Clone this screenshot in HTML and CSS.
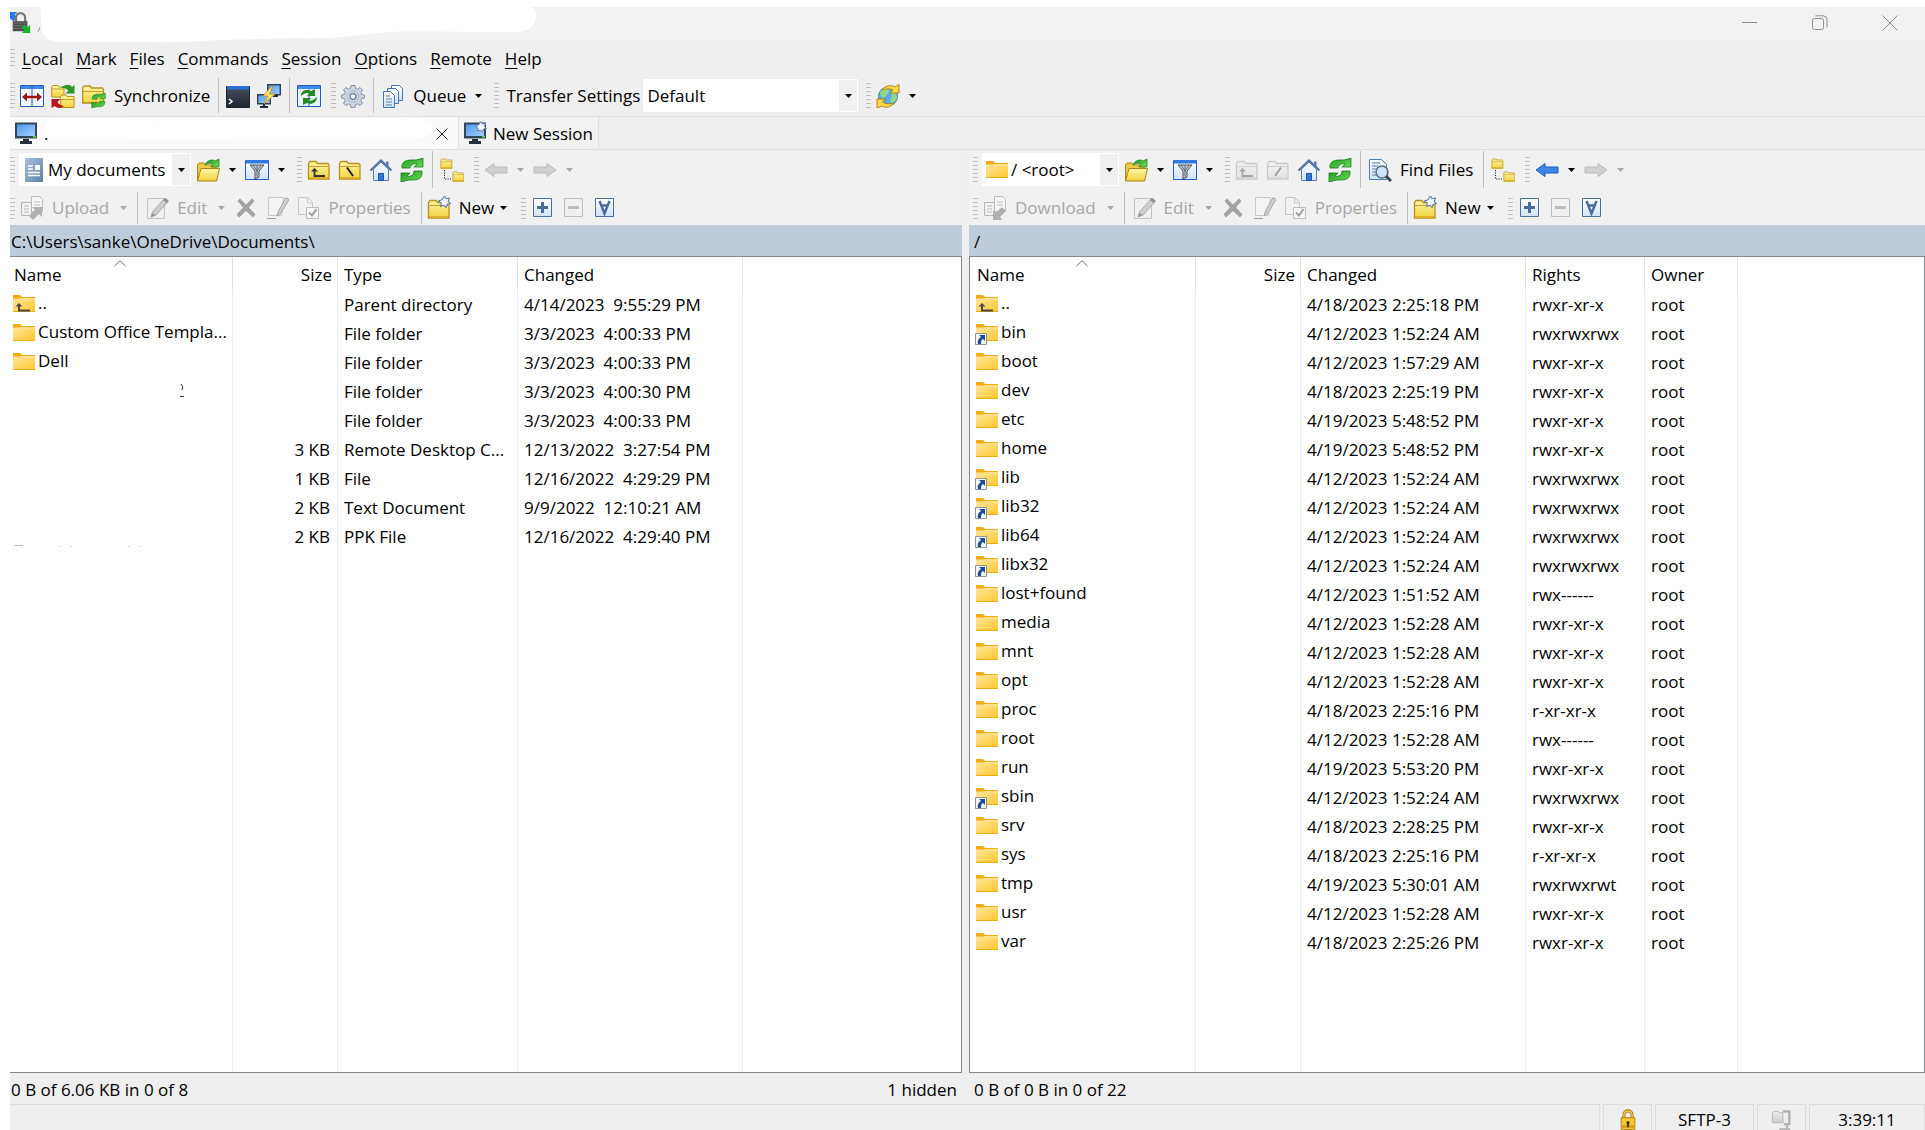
FILE: index.html
```html
<!DOCTYPE html>
<html lang="en">
<head>
    <meta charset="utf-8">
    <title>Documents - WinSCP</title>
    <link rel="stylesheet" href="styles.css">
</head>
<body>
<!-- shared icons -->
<svg class="defs" aria-hidden="true">
    <defs>
        <linearGradient id="gYellow" x1="0" y1="0" x2="0" y2="1"><stop offset="0" stop-color="#fdf6a8"/><stop offset="1" stop-color="#f3d33c"/></linearGradient>
        <linearGradient id="gFolder" x1="0" y1="0" x2="1" y2="1"><stop offset="0" stop-color="#ffe69a"/><stop offset="1" stop-color="#ffc832"/></linearGradient>
        <linearGradient id="gBlue" x1="0" y1="0" x2="1" y2="1"><stop offset="0" stop-color="#4f9bf5"/><stop offset="1" stop-color="#a5cdfb"/></linearGradient>
        <linearGradient id="gPale" x1="0" y1="0" x2="0" y2="1"><stop offset="0" stop-color="#ffffff"/><stop offset="1" stop-color="#cfe2f7"/></linearGradient>
        <linearGradient id="gDark" x1="0" y1="0" x2="0" y2="1"><stop offset="0" stop-color="#4a5361"/><stop offset="1" stop-color="#1d232d"/></linearGradient>
        <linearGradient id="gGreen" x1="0" y1="0" x2="1" y2="1"><stop offset="0" stop-color="#1d9a1d"/><stop offset="1" stop-color="#6fdc5a"/></linearGradient>
        <linearGradient id="gSteel" x1="0" y1="0" x2="1" y2="1"><stop offset="0" stop-color="#a9c1da"/><stop offset="1" stop-color="#5f82a8"/></linearGradient>
        <linearGradient id="gGrey" x1="0" y1="0" x2="0" y2="1"><stop offset="0" stop-color="#ededed"/><stop offset="1" stop-color="#cccccc"/></linearGradient>
    </defs>
    <symbol id="i-arrow" viewBox="0 0 7 4"><path d="M0 0h7L3.500 4z" fill="currentColor"/></symbol>
    <symbol id="i-compare" viewBox="0 0 24 24"><path d="M.5 1.500h23v21H.5z" fill="#f4f9ff" stroke="#2160ae"/><path d="M1 2h22v3H1z" fill="#3f8cf0"/><path d="M12 2v20" stroke="#2160ae"/><path d="M2 13l5-4.500v3.200h10V8.500l5 4.500-5 4.500v-3.200H7v3.200z" fill="#a01818"/></symbol>
    <symbol id="i-yf" viewBox="0 0 24 24"><path d="M1.500 21V5.500L3 3.500h6l1.500 2h10.500l1 1.500v14z" fill="url(#gYellow)" stroke="#b8901c" stroke-width="1.300"/><path d="M2 8.500h19.500" stroke="#c49d2a"/><path d="M2 20h19" stroke="#dcae2c" stroke-width="2"/></symbol>
    <symbol id="i-syncdirs" viewBox="0 0 24 24"><path d="M.7 13V3L2 1.500h5l1 1.500h5v10z" fill="url(#gYellow)" stroke="#b8901c"/><path d="M9.700 23.500v-11L11 11h4l1 1.500h7v11z" fill="url(#gYellow)" stroke="#b8901c"/><path d="M10 15.500h13M1 5h12" stroke="#c49d2a"/><path d="M10 4c4-4 9-4 11-1l2.500-2v8.500h-9l3-3c-2-2-4-2.500-7.500-2.500z" fill="#2a9624"/><path d="M13 22c-3 3-8 2-9 0l-3.500 2v-9h9l-3 3c1 2 3 3.500 6.500 4z" fill="#b41616"/></symbol>
    <symbol id="i-recycle" viewBox="0 0 24 24"><path d="M2 10C1 4 6 2 11 2h5l4-1 3-1v9h-9l3-3c-4-1-7 1-7 4z" fill="url(#gGreen)" stroke="#177a17" stroke-width=".8"/><path d="M22 13c1 7-4 9-8 9H9l-4 1-4 1v-9h9l-3 3c4 1 7-1 7-5z" fill="url(#gGreen)" stroke="#177a17" stroke-width=".8"/></symbol>
    <symbol id="i-sync" viewBox="0 0 24 24"><path d="M.7 19V3.500L2 2h6l1.500 2h11l1 1.500V19z" fill="url(#gYellow)" stroke="#b8901c" stroke-width="1.300"/><path d="M1 7.500h20" stroke="#c49d2a"/><svg x="9" y="9" width="15" height="15"><use href="#i-recycle"/></svg></symbol>
    <symbol id="i-console" viewBox="0 0 24 24"><path d="M.5 2.500h23v21H.5z" fill="url(#gDark)" stroke="#1d2430"/><path d="M1 2h22v3.500H1z" fill="#2a6fd6"/><path d="M3 15l3 2.500L3 20" fill="none" stroke="#fff" stroke-width="1.500"/></symbol>
    <symbol id="i-putty" viewBox="0 0 24 24"><path d="M10.700.7h12.600v10H10.700z" fill="url(#gBlue)" stroke="#2e4057" stroke-width="1.400"/><path d="M15 13h6v-2h-3z" fill="#222c3a"/><path d="M.7 10.700h12.600v9H.7z" fill="url(#gBlue)" stroke="#2e4057" stroke-width="1.400"/><path d="M3 22h8v2H3zM6 20h2v2H6z" fill="#222c3a"/><path d="M15 2L6 12h5L7 20 18 10h-5.500L16 2z" fill="#ffe36b" stroke="#c08f16" stroke-width=".8"/></symbol>
    <symbol id="i-keep" viewBox="0 0 24 24"><path d="M.5 1.500h23v21H.5z" fill="#e9f2fd" stroke="#2160ae"/><path d="M1 2h22v3H1z" fill="#3f8cf0"/><path d="M12 5v17" stroke="#2160ae"/><path d="M4 12c0-6 6-7 10-5l4-2v7h-8l2.500-2.500c-3-1-5.500 0-8.500 2.500z" fill="#23881f"/><path d="M20 13c0 6-6 8-10 6l-4 2v-7h8l-2.500 2.500c3 1 5.500-1 8.500-3.500z" fill="#23881f"/></symbol>
    <symbol id="i-gear" viewBox="0 0 24 24"><path d="M10 1.500h4l.6 3 1.800.7 2.600-1.700 2.500 2.500-1.700 2.600.7 1.800 3 .6v3l-3 .7-.7 1.800 1.700 2.600-2.500 2.500-2.600-1.700-1.800.7-.6 3h-4l-.6-3-1.800-.7L5 21.600l-2.500-2.500 1.700-2.600-.7-1.800-3-.7v-3l3-.6.7-1.800L2.500 6 5 3.500l2.600 1.700 1.800-.7z" fill="#ccd5df" stroke="#8592a3"/><circle cx="12" cy="12.500" r="5.500" fill="#dfe5eb" stroke="#a3adba"/><circle cx="12" cy="12.500" r="3" fill="#f5f6f8" stroke="#77859a" stroke-width="1.500"/></symbol>
    <symbol id="i-queue" viewBox="0 0 24 24"><g fill="url(#gPale)" stroke="#3f76b3"><path d="M10.500 1.500h8l3 3v12h-11z"/><path d="M6.500 4.500h8l3 3v12h-11z"/><path d="M2.500 7.500h7l4 4v12h-11z"/></g><path d="M5 12h4m-4 3h6m-6 3h6m-6 3h6" stroke="#4f83bb"/></symbol>
    <symbol id="i-globe" viewBox="0 0 24 24"><circle cx="12" cy="12.500" r="9.500" fill="#5fa8f2" stroke="#4a8a6a"/><path d="M4 9c2-5 6-6 8-5l1 4-4 5-3 1zM15 8l5 1 1 6-5 5-2-4 2-4z" fill="#8fd98a"/><path d="M6 6c4-5 9-5 13-3l4-2.500v8.500h-9l3-3c-3-1.500-7-1.500-11 0z" fill="#fdda3f" stroke="#a97c12" stroke-width=".9"/><path d="M18 19c-4 5-9 5-12 3l-5 2v-9h8.500l-3 3c3 2 7 2.500 11.500 1z" fill="#fdda3f" stroke="#a97c12" stroke-width=".9"/></symbol>
    <symbol id="i-monitor" viewBox="0 0 24 24"><path d="M1 1.500h22v16H1z" fill="#34465c"/><path d="M3 3.500h18v11.500H3z" fill="url(#gBlue)"/><path d="M19 15h3v1.500h-3z" fill="#6fd13c"/><path d="M9 18h6v2h3v3H6v-3h3z" fill="#26303d"/></symbol>
    <symbol id="i-star" viewBox="0 0 24 24"><path d="M12 1l3 5 6-1-2 6 4 4-6 1-2 6-4-4-6 2 1-6-5-4 6-2z" fill="#f4f9ff" stroke="#5c7fa8" stroke-width="2"/></symbol>
    <symbol id="i-newsession" viewBox="0 0 24 24"><use href="#i-monitor"/><svg x="12" y="0" width="12" height="12"><use href="#i-star"/></svg></symbol>
    <symbol id="i-doc" viewBox="0 0 18 24"><rect width="18" height="24" rx="1" fill="url(#gSteel)"/><path d="M3 8h5M3 11h5M3 14.500h12M3 17.500h12" stroke="#fff" stroke-width="1.300"/><path d="M10 7h5v5h-5z" fill="#fff"/></symbol>
    <symbol id="i-open" viewBox="0 0 24 24"><path d="M1.500 22V7L3 5h5l1.500 2H20v15z" fill="#eccb3e" stroke="#a8831c"/><path d="M1.500 23L5 10.500h18.500L20.500 23z" fill="url(#gYellow)" stroke="#a8831c"/><path d="M9 7c2-5 7-6 10-4l4-2v8h-8l2-3c-3-1-5-1-8 1z" fill="url(#gGreen)" stroke="#177a17" stroke-width=".7"/></symbol>
    <symbol id="i-filter" viewBox="0 0 24 24"><path d="M.5 2.500h23v19H.5z" fill="url(#gPale)" stroke="#2160ae"/><path d="M1 2h22v3.500H1z" fill="#2f7ae0"/><path d="M5 7h14l-5 6v6l-4 2v-8z" fill="#c8d0d9" stroke="#444e5a"/><path d="M8 7l4 6 4-6M12 7v12" stroke="#444e5a" fill="none" stroke-width=".8"/></symbol>
    <symbol id="i-up" viewBox="0 0 24 24"><use href="#i-yf"/><path d="M7.500 11v7H18" fill="none" stroke="#333" stroke-width="1.800"/><path d="M4 13.500l3.500-3.500 3.500 3.500z" fill="#333"/></symbol>
    <symbol id="i-rootl" viewBox="0 0 24 24"><use href="#i-yf"/><path d="M9 9.500l6 8.500" stroke="#222" stroke-width="2"/></symbol>
    <symbol id="i-rootr" viewBox="0 0 24 24"><use href="#i-yf"/><path d="M15 9.500L9 18" stroke="#222" stroke-width="2"/></symbol>
    <symbol id="i-home" viewBox="0 0 24 24"><path d="M4.500 22.500V11L12 4l7.500 7v11.500z" fill="url(#gPale)" stroke="#5a7ca6"/><path d="M17 3.500h2.500V9L17 7z" fill="#5a7ca6"/><path d="M1.500 12.500L12 2.500l10.500 10" fill="none" stroke="#54779f" stroke-width="2.200"/><path d="M9.500 15.500h5v7h-5z" fill="#2f78dd" stroke="#1d569f"/></symbol>
    <symbol id="i-tree" viewBox="0 0 24 24"><svg x="0" y="-1" width="13" height="13"><use href="#i-yf"/></svg><svg x="12" y="12" width="13" height="13"><use href="#i-yf"/></svg><path d="M4.500 12v9H11" fill="none" stroke="#222" stroke-dasharray="1.200 1.200"/></symbol>
    <symbol id="i-back" viewBox="0 0 24 24"><path d="M1 12l9-6.500v3.500h13v6H10v3.500z" fill="#3f86e8" stroke="#1d5cb4"/></symbol>
    <symbol id="i-backg" viewBox="0 0 24 24"><path d="M1 12l9-6.500v3.500h13v6H10v3.500z" fill="#d0d0d0" stroke="#b9b9b9"/></symbol>
    <symbol id="i-fwdg" viewBox="0 0 24 24"><path d="M23 12l-9-6.500v3.500H1v6h13v3.500z" fill="#d0d0d0" stroke="#b9b9b9"/></symbol>
    <symbol id="i-transfer" viewBox="0 0 24 24"><path d="M11.500.5h8l3 3v12h-11z" fill="#f6f6f6" stroke="#bdbdbd"/><path d="M1.500 6.500h10v13h-10z" fill="#f2f2f2" stroke="#b5b5b5"/><path d="M4 10h5m-5 3h5m-5 3h5m5-10h6m-6 3h6" stroke="#bdbdbd"/></symbol>
    <symbol id="i-upload" viewBox="0 0 24 24"><use href="#i-transfer"/><path d="M9 20l6-6-3-3h10v10l-3-3-6 6z" fill="#b0b0b0"/></symbol>
    <symbol id="i-download" viewBox="0 0 24 24"><use href="#i-transfer"/><path d="M23 15l-6 6 2 3H10v-9.500l3 2 6-5.500z" fill="#b0b0b0"/></symbol>
    <symbol id="i-edit" viewBox="0 0 24 24"><path d="M2.500 2.500h17v20h-17z" fill="#f0f0f0" stroke="#c2c2c2"/><path d="M6 21l1.500-5L20 2l3.500 3L11 19z" fill="#cfcfcf" stroke="#a6a6a6"/><path d="M6 21l2-4 2 2zM18 4l3.500 3L23.500 5 20 2z" fill="#8f8f8f"/></symbol>
    <symbol id="i-x" viewBox="0 0 24 24"><path d="M3.500 5L6 2.500l6 6 6-6L20.500 5l-5.500 6.500 6.500 7L19 21.500l-7-6.500-7 6.500L2.500 18.500l6.500-7z" fill="#a2a2a2"/></symbol>
    <symbol id="i-rename" viewBox="0 0 24 24"><path d="M3.500 1.500h15l-2 18h-13z" fill="#f4f4f4" stroke="#c8c8c8"/><path d="M2 22.500h9" stroke="#9d9d9d"/><path d="M12 20l1.500-5L21 1.500l3 2L16 17z" fill="#cfcfcf" stroke="#a6a6a6"/></symbol>
    <symbol id="i-props" viewBox="0 0 24 24"><path d="M2.500 1.500h9l5 5v12h-14z" fill="#f2f2f2" stroke="#c6c6c6"/><path d="M11.500 2v5h5" fill="none" stroke="#c6c6c6"/><path d="M10.500 11.500h12v11h-12z" fill="#f6f6f6" stroke="#bcbcbc"/><path d="M13 16.500l3 3 4.500-6.500" fill="none" stroke="#a2a2a2" stroke-width="2"/></symbol>
    <symbol id="i-newfolder" viewBox="0 0 24 24"><use href="#i-yf" y="1"/><svg x="11" y="-1" width="13" height="14"><use href="#i-star"/></svg></symbol>
    <symbol id="i-plus" viewBox="0 0 24 24"><path d="M2.500 2.500h18v18h-18z" fill="url(#gPale)" stroke="#4b6f9b"/><path d="M11.500 6v11M6 11.500h11" stroke="#476a96" stroke-width="3"/></symbol>
    <symbol id="i-minus" viewBox="0 0 24 24"><path d="M2.500 2.500h18v18h-18z" fill="#f0f0f0" stroke="#bcbcbc"/><path d="M6 11.500h11" stroke="#bcbcbc" stroke-width="3"/></symbol>
    <symbol id="i-invert" viewBox="0 0 24 24"><path d="M2.500 2.500h18v18h-18z" fill="url(#gPale)" stroke="#4b6f9b"/><path d="M6.500 5l5 12.500 5-12.500M8 9.500h7" fill="none" stroke="#476a96" stroke-width="2.400"/></symbol>
    <symbol id="i-find" viewBox="0 0 24 24"><path d="M1.500 1.500h12l5 5v15h-17z" fill="url(#gPale)" stroke="#4b7db5"/><path d="M4 5h8m-8 3h6m-6 3h4m-4 3h3m-3 3h4" stroke="#4b7db5"/><circle cx="14" cy="14" r="6" fill="#cfe2f7" fill-opacity=".8" stroke="#5d6d80" stroke-width="1.600"/><path d="M18 18l5 5" stroke="#3c4653" stroke-width="3"/></symbol>
    <symbol id="i-folder" viewBox="0 0 24 24"><path d="M1 3h7l2 2h13v15H1z" fill="#f0ac12"/><path d="M1 6.500h22V19H1z" fill="url(#gFolder)"/><path d="M1 7h7l2-1h13v2H1z" fill="#ffe08c"/></symbol>
    <symbol id="i-parent" viewBox="0 0 24 24"><use href="#i-folder"/><path d="M7 12v6.500h11" fill="none" stroke="#4a4a4a" stroke-width="2"/><path d="M3.500 14.500L7 11l3.500 3.500z" fill="#4a4a4a"/></symbol>
    <symbol id="i-link" viewBox="0 0 24 24"><use href="#i-folder"/><path d="M.5 12.500h11v11H.5z" fill="#f4f8ff" stroke="#8d949e"/><path d="M4 14h6v6l-2-2c-2 1-2 3-2 5H3c-1-3 0-5 3-7z" fill="#1f4e94"/></symbol>
    <symbol id="i-lock" viewBox="0 0 18 24"><path d="M4.500 11V6.500C4.500.5 13.500.5 13.500 6.500V11" fill="none" stroke="#a87c10" stroke-width="3.400"/><path d="M4.500 11V6.500C4.500.8 13.500.8 13.500 6.500V11" fill="none" stroke="#f2cf52" stroke-width="1.400"/><path d="M1.500 9.500h15v13h-15z" fill="#f3c92c" stroke="#a87c10"/><path d="M2 19h14" stroke="#d69f18" stroke-width="3"/><path d="M9 13a2 2 0 0 1 1 3.500V20H8v-3.500A2 2 0 0 1 9 13z" fill="#3a2c06"/></symbol>
    <symbol id="i-clamp" viewBox="0 0 24 24"><path d="M1.500 15V4L3 2.500h5L9.500 4H13v11z" fill="url(#gGrey)" stroke="#b5b5b5"/><path d="M13 2.500h7v14h-2.500v4M14 16.500h5" fill="none" stroke="#b0b0b0" stroke-width="2.500"/><path d="M9 21h12v2.500H9z" fill="#b0b0b0"/></symbol>
</svg>

<div class="window">
    <header class="title-bar">
        <svg class="app-icon" viewBox="0 0 24 24" aria-hidden="true"><path d="M0 0h8L5 3l3 3-4 4-4-3z" fill="#1f7cf0"/><path d="M6.500 12V6.500c0-7 10-7 10 0V12" fill="none" stroke="#777" stroke-width="2.500"/><path d="M3 10h16v11H3z" fill="#4c4c4c"/><path d="M3 12h16M3 15h16M3 18h16" stroke="#777"/><path d="M22 23h-9l3-3-3-3 3-3 3 3 3-3z" fill="#19b526"/></svg>
        <svg class="title-smudge" viewBox="0 0 510 36" aria-hidden="true"><path d="M12 0H504q4 3 4 9Q506 25 488 25L400 24.500Q370 23 330 28Q305 32 270 31L190 33Q150 36 125 35H30Q14 34 13 18V6z" fill="#fff"/><path d="M10 25l2-5" stroke="#999"/></svg>
        <div class="win-buttons">
            <button aria-label="Minimize"><svg viewBox="0 0 16 16"><path d="M0 7.500h15"/></svg></button>
            <button aria-label="Restore"><svg viewBox="0 0 16 16"><rect x=".5" y="3.500" width="11" height="11" rx="2"/><path d="M3.500.8H11Q15 .8 15 4.500v8"/></svg></button>
            <button aria-label="Close"><svg viewBox="0 0 16 16"><path d="M.5.5l15 15m0-15l-15 15"/></svg></button>
        </div>
    </header>

    <nav class="menu">
        <span class="grip"></span>
        <button><u>L</u>ocal</button>
        <button><u>M</u>ark</button>
        <button><u>F</u>iles</button>
        <button><u>C</u>ommands</button>
        <button><u>S</u>ession</button>
        <button><u>O</u>ptions</button>
        <button><u>R</u>emote</button>
        <button><u>H</u>elp</button>
    </nav>

    <div class="toolbar main-bar">
        <span class="grip"></span>
        <button class="tool" aria-label="Compare directories"><svg><use href="#i-compare"/></svg></button>
        <button class="tool" aria-label="Synchronize browsing"><svg><use href="#i-syncdirs"/></svg></button>
        <button class="tool"><svg><use href="#i-sync"/></svg><span>Synchronize</span></button>
        <span class="sep"></span>
        <button class="tool" aria-label="Console"><svg><use href="#i-console"/></svg></button>
        <button class="tool" aria-label="Open in PuTTY"><svg><use href="#i-putty"/></svg></button>
        <span class="sep"></span>
        <button class="tool" aria-label="Keep remote directory up to date"><svg><use href="#i-keep"/></svg></button>
        <span class="grip"></span>
        <button class="tool" aria-label="Preferences"><svg><use href="#i-gear"/></svg></button>
        <span class="sep"></span>
        <button class="tool"><svg><use href="#i-queue"/></svg><span>Queue</span></button>
        <button class="drop" aria-label="Queue options"><svg><use href="#i-arrow"/></svg></button>
        <span class="grip"></span>
        <label class="field-label" for="transfer">Transfer Settings</label>
        <div class="combo transfer">
            <select id="transfer"><option>Default</option></select>
            <span class="combo-arrow"><svg><use href="#i-arrow"/></svg></span>
        </div>
        <span class="grip"></span>
        <button class="tool" aria-label="Check for updates"><svg><use href="#i-globe"/></svg></button>
        <button class="drop" aria-label="Update options"><svg><use href="#i-arrow"/></svg></button>
    </div>

    <div class="tabs">
        <div class="tab active">
            <svg class="tab-icon"><use href="#i-monitor"/></svg>
            <span>.</span>
            <svg class="tab-smudge" viewBox="0 0 396 26" preserveAspectRatio="none" aria-hidden="true"><path d="M12 1Q50 0 110 3L370 0Q394 2 394 10Q392 21 375 23L60 24H16Q2 24 1 14Q2 3 12 1z" fill="#fff"/></svg>
            <button class="tab-close" aria-label="Close tab"><svg viewBox="0 0 12 12"><path d="M.5.5l11 11m0-11l-11 11" stroke="#222" fill="none"/></svg></button>
        </div>
        <button class="tab"><svg class="tab-icon"><use href="#i-newsession"/></svg>New Session</button>
    </div>

    <main class="panels">
        <!-- local -->
        <section class="panel local">
            <div class="toolbar">
                <span class="grip"></span>
                <div class="combo drive">
                    <svg class="combo-icon"><use href="#i-doc"/></svg>
                    <select aria-label="Local drive"><option>My documents</option></select>
                    <span class="combo-arrow"><svg><use href="#i-arrow"/></svg></span>
                </div>
                <button class="tool" aria-label="Open directory"><svg><use href="#i-open"/></svg></button>
                <button class="drop" aria-label="Bookmarks"><svg><use href="#i-arrow"/></svg></button>
                <button class="tool" aria-label="Filter"><svg><use href="#i-filter"/></svg></button>
                <button class="drop" aria-label="Filter options"><svg><use href="#i-arrow"/></svg></button>
                <span class="grip"></span>
                <button class="tool" aria-label="Parent directory"><svg><use href="#i-up"/></svg></button>
                <button class="tool" aria-label="Root directory"><svg><use href="#i-rootl"/></svg></button>
                <button class="tool" aria-label="Home directory"><svg><use href="#i-home"/></svg></button>
                <button class="tool" aria-label="Refresh"><svg><use href="#i-recycle"/></svg></button>
                <span class="sep"></span>
                <button class="tool" aria-label="Tree"><svg><use href="#i-tree"/></svg></button>
                <span class="grip"></span>
                <button class="tool" aria-label="Back" disabled><svg><use href="#i-backg"/></svg></button>
                <button class="drop" aria-label="Back history" disabled><svg><use href="#i-arrow"/></svg></button>
                <button class="tool" aria-label="Forward" disabled><svg><use href="#i-fwdg"/></svg></button>
                <button class="drop" aria-label="Forward history" disabled><svg><use href="#i-arrow"/></svg></button>
            </div>
            <div class="toolbar file-bar">
                <span class="grip"></span>
                <button class="tool" disabled><svg><use href="#i-upload"/></svg><span>Upload</span></button>
                <button class="drop" aria-label="Upload options" disabled><svg><use href="#i-arrow"/></svg></button>
                <span class="sep"></span>
                <button class="tool" disabled><svg><use href="#i-edit"/></svg><span>Edit</span></button>
                <button class="drop" aria-label="Edit options" disabled><svg><use href="#i-arrow"/></svg></button>
                <button class="tool" aria-label="Delete" disabled><svg><use href="#i-x"/></svg></button>
                <button class="tool" aria-label="Rename" disabled><svg><use href="#i-rename"/></svg></button>
                <button class="tool" disabled><svg><use href="#i-props"/></svg><span>Properties</span></button>
                <span class="sep"></span>
                <button class="tool new"><svg><use href="#i-newfolder"/></svg><span>New</span><svg class="caret"><use href="#i-arrow"/></svg></button>
                <span class="grip"></span>
                <button class="tool" aria-label="Select"><svg><use href="#i-plus"/></svg></button>
                <button class="tool" aria-label="Unselect" disabled><svg><use href="#i-minus"/></svg></button>
                <button class="tool" aria-label="Invert selection"><svg><use href="#i-invert"/></svg></button>
            </div>
            <div class="path">C:\Users\sanke\OneDrive\Documents\</div>
            <div class="list">
                <table>
                    <colgroup><col class="c-name"><col class="c-size"><col class="c-type"><col class="c-date"><col></colgroup>
                    <thead>
                        <tr><th>Name<svg class="sort" viewBox="0 0 12 7"><path d="M.5 6L6 .7 11.500 6"/></svg></th><th class="size">Size</th><th>Type</th><th>Changed</th><th></th></tr>
                    </thead>
                    <tbody>
                        <tr><td><svg><use href="#i-parent"/></svg>..</td><td></td><td>Parent directory</td><td>4/14/2023  9:55:29 PM</td><td></td></tr>
                        <tr><td><svg><use href="#i-folder"/></svg>Custom Office Templa...</td><td></td><td>File folder</td><td>3/3/2023  4:00:33 PM</td><td></td></tr>
                        <tr><td><svg><use href="#i-folder"/></svg>Dell</td><td></td><td>File folder</td><td>3/3/2023  4:00:33 PM</td><td></td></tr>
                        <tr><td><svg class="trace" viewBox="0 0 200 24"><path d="M169 5q3 3 1 6M168 17.500h4" fill="none" stroke="#334"/></svg></td><td></td><td>File folder</td><td>3/3/2023  4:00:30 PM</td><td></td></tr>
                        <tr><td></td><td></td><td>File folder</td><td>3/3/2023  4:00:33 PM</td><td></td></tr>
                        <tr><td></td><td class="size">3 KB</td><td>Remote Desktop C...</td><td>12/13/2022  3:27:54 PM</td><td></td></tr>
                        <tr><td></td><td class="size">1 KB</td><td>File</td><td>12/16/2022  4:29:29 PM</td><td></td></tr>
                        <tr><td></td><td class="size">2 KB</td><td>Text Document</td><td>9/9/2022  12:10:21 AM</td><td></td></tr>
                        <tr><td><svg class="trace" viewBox="0 0 200 24"><path d="M2 21.500h9" stroke="#bbb"/><path d="M47 22.500h2m9 0h2m56 0h2m9 0h2" stroke="#ddd"/></svg></td><td class="size">2 KB</td><td>PPK File</td><td>12/16/2022  4:29:40 PM</td><td></td></tr>
                        <tr class="rest"><td></td><td></td><td></td><td></td><td></td></tr>
                    </tbody>
                </table>
            </div>
            <div class="summary"><span>0 B of 6.06 KB in 0 of 8</span><span>1 hidden</span></div>
        </section>

        <!-- remote -->
        <section class="panel remote">
            <div class="toolbar">
                <span class="grip"></span>
                <div class="combo root">
                    <svg class="combo-icon"><use href="#i-folder"/></svg>
                    <select aria-label="Remote directory"><option>/ &lt;root&gt;</option></select>
                    <span class="combo-arrow"><svg><use href="#i-arrow"/></svg></span>
                </div>
                <button class="tool" aria-label="Open directory"><svg><use href="#i-open"/></svg></button>
                <button class="drop" aria-label="Bookmarks"><svg><use href="#i-arrow"/></svg></button>
                <button class="tool" aria-label="Filter"><svg><use href="#i-filter"/></svg></button>
                <button class="drop" aria-label="Filter options"><svg><use href="#i-arrow"/></svg></button>
                <span class="grip"></span>
                <button class="tool faded" aria-label="Parent directory" disabled><svg><use href="#i-up"/></svg></button>
                <button class="tool faded" aria-label="Root directory" disabled><svg><use href="#i-rootr"/></svg></button>
                <button class="tool" aria-label="Home directory"><svg><use href="#i-home"/></svg></button>
                <button class="tool" aria-label="Refresh"><svg><use href="#i-recycle"/></svg></button>
                <span class="sep"></span>
                <button class="tool"><svg><use href="#i-find"/></svg><span>Find Files</span></button>
                <span class="sep"></span>
                <button class="tool" aria-label="Tree"><svg><use href="#i-tree"/></svg></button>
                <span class="grip"></span>
                <button class="tool" aria-label="Back"><svg><use href="#i-back"/></svg></button>
                <button class="drop" aria-label="Back history"><svg><use href="#i-arrow"/></svg></button>
                <button class="tool" aria-label="Forward" disabled><svg><use href="#i-fwdg"/></svg></button>
                <button class="drop" aria-label="Forward history" disabled><svg><use href="#i-arrow"/></svg></button>
            </div>
            <div class="toolbar file-bar">
                <span class="grip"></span>
                <button class="tool" disabled><svg><use href="#i-download"/></svg><span>Download</span></button>
                <button class="drop" aria-label="Download options" disabled><svg><use href="#i-arrow"/></svg></button>
                <span class="sep"></span>
                <button class="tool" disabled><svg><use href="#i-edit"/></svg><span>Edit</span></button>
                <button class="drop" aria-label="Edit options" disabled><svg><use href="#i-arrow"/></svg></button>
                <button class="tool" aria-label="Delete" disabled><svg><use href="#i-x"/></svg></button>
                <button class="tool" aria-label="Rename" disabled><svg><use href="#i-rename"/></svg></button>
                <button class="tool" disabled><svg><use href="#i-props"/></svg><span>Properties</span></button>
                <span class="sep"></span>
                <button class="tool new"><svg><use href="#i-newfolder"/></svg><span>New</span><svg class="caret"><use href="#i-arrow"/></svg></button>
                <span class="grip"></span>
                <button class="tool" aria-label="Select"><svg><use href="#i-plus"/></svg></button>
                <button class="tool" aria-label="Unselect" disabled><svg><use href="#i-minus"/></svg></button>
                <button class="tool" aria-label="Invert selection"><svg><use href="#i-invert"/></svg></button>
            </div>
            <div class="path">/</div>
            <div class="list">
                <table>
                    <colgroup><col class="c-name"><col class="c-size"><col class="c-date"><col class="c-rights"><col class="c-owner"><col></colgroup>
                    <thead>
                        <tr><th>Name<svg class="sort" viewBox="0 0 12 7"><path d="M.5 6L6 .7 11.500 6"/></svg></th><th class="size">Size</th><th>Changed</th><th>Rights</th><th>Owner</th><th></th></tr>
                    </thead>
                    <tbody>
                        <tr><td><svg><use href="#i-parent"/></svg>..</td><td></td><td>4/18/2023 2:25:18 PM</td><td>rwxr-xr-x</td><td>root</td><td></td></tr>
                        <tr><td><svg><use href="#i-link"/></svg>bin</td><td></td><td>4/12/2023 1:52:24 AM</td><td>rwxrwxrwx</td><td>root</td><td></td></tr>
                        <tr><td><svg><use href="#i-folder"/></svg>boot</td><td></td><td>4/12/2023 1:57:29 AM</td><td>rwxr-xr-x</td><td>root</td><td></td></tr>
                        <tr><td><svg><use href="#i-folder"/></svg>dev</td><td></td><td>4/18/2023 2:25:19 PM</td><td>rwxr-xr-x</td><td>root</td><td></td></tr>
                        <tr><td><svg><use href="#i-folder"/></svg>etc</td><td></td><td>4/19/2023 5:48:52 PM</td><td>rwxr-xr-x</td><td>root</td><td></td></tr>
                        <tr><td><svg><use href="#i-folder"/></svg>home</td><td></td><td>4/19/2023 5:48:52 PM</td><td>rwxr-xr-x</td><td>root</td><td></td></tr>
                        <tr><td><svg><use href="#i-link"/></svg>lib</td><td></td><td>4/12/2023 1:52:24 AM</td><td>rwxrwxrwx</td><td>root</td><td></td></tr>
                        <tr><td><svg><use href="#i-link"/></svg>lib32</td><td></td><td>4/12/2023 1:52:24 AM</td><td>rwxrwxrwx</td><td>root</td><td></td></tr>
                        <tr><td><svg><use href="#i-link"/></svg>lib64</td><td></td><td>4/12/2023 1:52:24 AM</td><td>rwxrwxrwx</td><td>root</td><td></td></tr>
                        <tr><td><svg><use href="#i-link"/></svg>libx32</td><td></td><td>4/12/2023 1:52:24 AM</td><td>rwxrwxrwx</td><td>root</td><td></td></tr>
                        <tr><td><svg><use href="#i-folder"/></svg>lost+found</td><td></td><td>4/12/2023 1:51:52 AM</td><td>rwx------</td><td>root</td><td></td></tr>
                        <tr><td><svg><use href="#i-folder"/></svg>media</td><td></td><td>4/12/2023 1:52:28 AM</td><td>rwxr-xr-x</td><td>root</td><td></td></tr>
                        <tr><td><svg><use href="#i-folder"/></svg>mnt</td><td></td><td>4/12/2023 1:52:28 AM</td><td>rwxr-xr-x</td><td>root</td><td></td></tr>
                        <tr><td><svg><use href="#i-folder"/></svg>opt</td><td></td><td>4/12/2023 1:52:28 AM</td><td>rwxr-xr-x</td><td>root</td><td></td></tr>
                        <tr><td><svg><use href="#i-folder"/></svg>proc</td><td></td><td>4/18/2023 2:25:16 PM</td><td>r-xr-xr-x</td><td>root</td><td></td></tr>
                        <tr><td><svg><use href="#i-folder"/></svg>root</td><td></td><td>4/12/2023 1:52:28 AM</td><td>rwx------</td><td>root</td><td></td></tr>
                        <tr><td><svg><use href="#i-folder"/></svg>run</td><td></td><td>4/19/2023 5:53:20 PM</td><td>rwxr-xr-x</td><td>root</td><td></td></tr>
                        <tr><td><svg><use href="#i-link"/></svg>sbin</td><td></td><td>4/12/2023 1:52:24 AM</td><td>rwxrwxrwx</td><td>root</td><td></td></tr>
                        <tr><td><svg><use href="#i-folder"/></svg>srv</td><td></td><td>4/18/2023 2:28:25 PM</td><td>rwxr-xr-x</td><td>root</td><td></td></tr>
                        <tr><td><svg><use href="#i-folder"/></svg>sys</td><td></td><td>4/18/2023 2:25:16 PM</td><td>r-xr-xr-x</td><td>root</td><td></td></tr>
                        <tr><td><svg><use href="#i-folder"/></svg>tmp</td><td></td><td>4/19/2023 5:30:01 AM</td><td>rwxrwxrwt</td><td>root</td><td></td></tr>
                        <tr><td><svg><use href="#i-folder"/></svg>usr</td><td></td><td>4/12/2023 1:52:28 AM</td><td>rwxr-xr-x</td><td>root</td><td></td></tr>
                        <tr><td><svg><use href="#i-folder"/></svg>var</td><td></td><td>4/18/2023 2:25:26 PM</td><td>rwxr-xr-x</td><td>root</td><td></td></tr>
                        <tr class="rest"><td></td><td></td><td></td><td></td><td></td><td></td></tr>
                    </tbody>
                </table>
            </div>
            <div class="summary"><span>0 B of 0 B in 0 of 22</span></div>
        </section>
    </main>

    <footer class="status">
        <span class="cell fill"></span>
        <span class="cell small"><svg class="lock"><use href="#i-lock"/></svg></span>
        <span class="cell proto">SFTP-3</span>
        <span class="cell small"><svg><use href="#i-clamp"/></svg></span>
        <span class="cell time">3:39:11</span>
    </footer>
</div>
</body>
</html>
```

FILE: styles.css
```css
*{box-sizing: border-box;}
body{margin: 0;background: #fff;font: 17px/24px "Open Sans","Noto Sans",sans-serif;color: #000;}
button,select{font: inherit;color: inherit;border: 0;margin: 0;padding: 0;background: none;}
svg{display: block;flex: none;}
.defs{position: absolute;width: 0;height: 0;}

.window{display: flex;flex-direction: column;min-height: 100vh;padding: 7px 0 0 10px;}

/* title bar */
.title-bar{position: relative;display: flex;align-items: center;height: 33px;background: #f2f2f2;}
.app-icon{width: 22px;height: 24px;margin-bottom: 2px;}
.title-smudge{position: absolute;left: 18px;top: 0;width: 510px;height: 36px;z-index: 1;}
.win-buttons{display: flex;gap: 54px;margin: 0 0 2px auto;padding-right: 27px;}
.win-buttons svg{width: 16px;height: 16px;fill: none;stroke: #8c8c8c;}

/* menu */
.menu{display: flex;align-items: center;height: 37px;background: #efefef;}
.menu .grip{height: 20px;margin: 0 7px 0 0;}
.menu button{margin-right: 13px;}
.menu u{text-underline-offset: 3px;text-decoration-thickness: 1px;}

/* toolbars */
.toolbar{display: flex;align-items: center;height: 39px;background: #f1f1f1;}
.grip{flex: none;width: 5px;height: 25px;margin: 0 5px 0 3px;background: repeating-linear-gradient(#c0c0c0 0 1px,transparent 1px 4px);}
.grip:first-child{margin-left: 0;}
.tool{display: flex;align-items: center;height: 30px;margin-right: 7px;white-space: nowrap;}
.tool svg{width: 24px;height: 24px;}
.tool span{margin: 0 2px 0 8px;}
.tool .caret{width: 7px;height: 4px;margin-left: 4px;}
.drop{height: 24px;margin: 0 9px 0 2px;}
.drop svg{width: 7px;height: 4px;}
.sep{flex: none;align-self: stretch;width: 1px;margin: 1px 7px 1px 1px;background: #bfbfbf;}
.tool:disabled,.drop:disabled{color: #a6a6a6;}
.faded svg{filter: grayscale(1);opacity: 0.4;}
.main-bar{height: 40px;padding-bottom: 2px;border-bottom: 1px solid #dfdfdf;}
.main-bar,.tabs{background: #efefef;}
.main-bar .tool span{margin-right: 0;}
.file-bar{height: 36px;padding-top: 2px;}
.file-bar .grip{height: 21px;}
.file-bar .new{margin-left: -2px;margin-right: 11px;}
.field-label{margin: 0 4px 0 2px;}

.combo{position: relative;height: 33px;margin: 0 5px 0 -1px;background: #fff;}
.combo select{width: 100%;height: 100%;appearance: none;padding-left: 4px;}
.combo-arrow{position: absolute;right: 1px;top: 1px;bottom: 1px;display: flex;align-items: center;justify-content: center;width: 18px;background: #f0f0f0;pointer-events: none;}
.combo-arrow svg{width: 7px;height: 4px;}
.combo-icon{position: absolute;left: 6px;top: 5px;width: 18px;height: 24px;}
.transfer{width: 215px;}
.drive{width: 172px;}
.drive select{padding-left: 29px;}
.root{width: 137px;}
.root .combo-icon{left: 3px;width: 24px;}
.root select{padding-left: 29px;}

/* session tabs */
.tabs{display: flex;height: 33px;border-bottom: 1px solid #dfdfdf;}
.tab{display: flex;align-items: center;gap: 6px;padding: 2px 5px 0 4px;border-right: 1px solid #dfdfdf;background: #f2f2f2;}
.tab-icon{width: 24px;height: 24px;margin-bottom: 2px;}
.tab.active{position: relative;width: 449px;padding-right: 10px;background: #fafafa;}
.tab-smudge{position: absolute;left: 33px;top: 1px;width: 393px;height: 24px;}
.tab-close{margin-left: auto;}
.tab-close svg{width: 12px;height: 12px;}

/* panels */
.panels{flex: 1;display: grid;grid-template-columns: 952fr 956fr;gap: 7px;background: #efefef;}
.panel{display: flex;flex-direction: column;min-width: 0;}
.remote .toolbar{padding-left: 4px;}
.path{height: 31px;padding: 0 1px;line-height: 34px;background: #bfccda;}
.remote .path{padding: 0 5px;}
.list{flex: 1;display: grid;border: 1px solid #828790;border-left: 0;background: #fff;}
.remote .list{border-left: 1px solid #828790;}
table{width: 100%;height: 100%;table-layout: fixed;border-collapse: separate;border-spacing: 0;}
.c-name{width: 223px;}
.remote .c-name{width: 226px;}
.c-size{width: 105px;}
.c-type{width: 180px;}
.c-date{width: 225px;}
.c-rights{width: 119px;}
.c-owner{width: 93px;}
th,td{padding: 0 0 0 6px;text-align: left;font-weight: normal;white-space: pre;border-right: 1px solid #e6effa;overflow: hidden;}
th:last-child,td:last-child{border-right: 0;}
th{position: relative;height: 33px;padding-top: 2px;border-color: #e2e2e2;}
td{height: 29px;}
th:first-child{padding-left: 4px;}
td:first-child{padding-left: 2px;}
.remote th:first-child{padding-left: 7px;}
.remote td:first-child{padding-left: 5px;}
td svg{display: inline-block;width: 24px;height: 24px;margin: 0 2px 2px 0;vertical-align: middle;}
td .trace{width: 200px;}
.rest td{height: auto;}
th.size,td.size{padding: 0 7px 0 0;text-align: right;}
th.size{padding: 2px 5px 0 0;}
.sort{position: absolute;left: 50%;top: 3px;width: 12px;height: 7px;margin-left: -7px;fill: none;stroke: #666;}
.summary{display: flex;justify-content: space-between;height: 31px;padding: 0 5px 0 1px;line-height: 34px;}
.remote .summary{padding-left: 5px;}

/* status bar */
.status{display: flex;gap: 3px;height: 26px;background: #efefef;}
.cell{display: flex;align-items: center;justify-content: center;border: 1px solid #dcdcdc;border-bottom: 0;padding-top: 4px;}
.fill{flex: 1;border-left: 0;}
.small{width: 49px;}
.proto{width: 99px;}
.time{width: 116px;}
.cell svg{width: 22px;height: 22px;}
```
